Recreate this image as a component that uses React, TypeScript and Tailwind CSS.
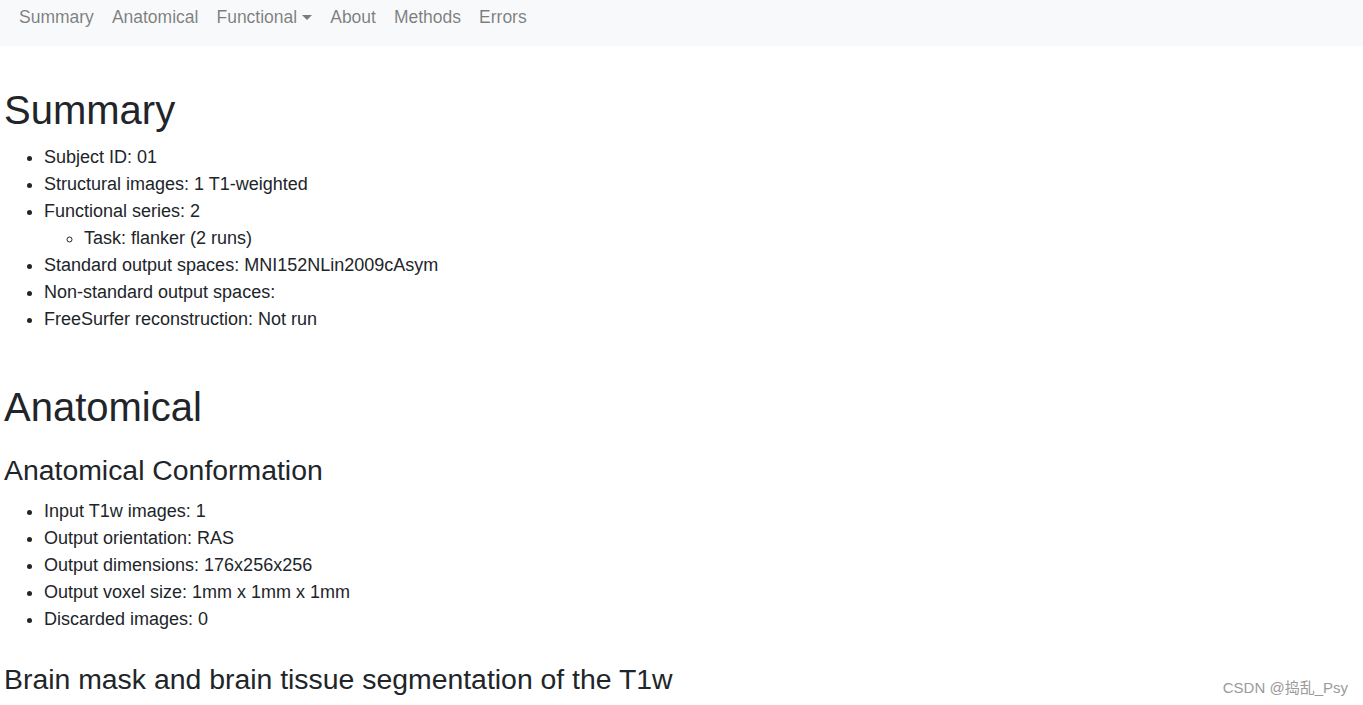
import React from 'react';

const navItems = ['Summary', 'Anatomical', 'Functional', 'About', 'Methods', 'Errors'];

export default function App() {
  return (
    <div
      className="relative min-h-[705px] bg-white text-[#212529] overflow-hidden"
      style={{ fontFamily: '"Liberation Sans", Arial, "Noto Sans CJK SC", sans-serif' }}
    >
      {/* Navbar */}
      <nav className="h-[46px] bg-[#f8f9fa] flex items-start pt-[5px] px-[10px]">
        {navItems.map((item) => (
          <a
            key={item}
            className="px-[9px] text-[17.5px] leading-[25px] text-black/50 flex items-center"
          >
            {item}
            {item === 'Functional' && (
              <span className="ml-[5px] inline-block w-0 h-0 border-t-[5px] border-t-black/50 border-x-[5px] border-x-transparent" />
            )}
          </a>
        ))}
      </nav>

      <div className="pl-[4px]">
        {/* Summary */}
        <h1 className="mt-[40px] mb-[10px] text-[40px] leading-[48px]">Summary</h1>
        <ul className="list-disc pl-[40px] text-[18px] leading-[27px]">
          <li>Subject ID: 01</li>
          <li>Structural images: 1 T1-weighted</li>
          <li>
            Functional series: 2
            <ul className="list-[circle] pl-[40px]">
              <li>Task: flanker (2 runs)</li>
            </ul>
          </li>
          <li>Standard output spaces: MNI152NLin2009cAsym</li>
          <li>Non-standard output spaces: </li>
          <li>FreeSurfer reconstruction: Not run</li>
        </ul>

        {/* Anatomical */}
        <h1 className="mt-[50px] mb-[22px] text-[40px] leading-[48px]">Anatomical</h1>
        <h3 className="mb-[11px] text-[28.4px] leading-[34px]">Anatomical Conformation</h3>
        <ul className="list-disc pl-[40px] text-[18px] leading-[27px]">
          <li>Input T1w images: 1</li>
          <li>Output orientation: RAS</li>
          <li>Output dimensions: 176x256x256</li>
          <li>Output voxel size: 1mm x 1mm x 1mm</li>
          <li>Discarded images: 0</li>
        </ul>
        <h3 className="mt-[29px] text-[28.4px] leading-[34px]">
          Brain mask and brain tissue segmentation of the T1w
        </h3>
      </div>

      {/* Watermark */}
      <div className="absolute right-[15px] bottom-[8px] text-[15px] leading-[18px] text-[#9a9a9a]">
        CSDN @捣乱_Psy
      </div>
    </div>
  );
}
